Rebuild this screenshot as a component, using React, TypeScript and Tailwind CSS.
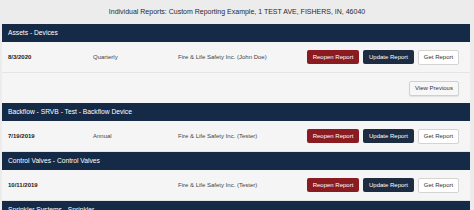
import React from "react";

type Row = { date: string; freq: string; who: string; previous?: boolean };
type Section = { title: string; rows: Row[] };

const sections: Section[] = [
  {
    title: "Assets - Devices",
    rows: [{ date: "8/3/2020", freq: "Quarterly", who: "Fire & Life Safety Inc. (John Doe)", previous: true }],
  },
  {
    title: "Backflow - SRVB - Test - Backflow Device",
    rows: [{ date: "7/19/2019", freq: "Annual", who: "Fire & Life Safety Inc. (Tester)" }],
  },
  {
    title: "Control Valves - Control Valves",
    rows: [{ date: "10/11/2019", freq: "", who: "Fire & Life Safety Inc. (Tester)" }],
  },
  {
    title: "Sprinkler Systems - Sprinkler",
    rows: [],
  },
];

function ReportRow({ row }: { row: Row }) {
  return (
    <>
      <div className="h-[31px] bg-[#f5f5f5] border-b border-[#e4e4e4] flex items-center pl-[6px] pr-[11px]">
        <div className="w-[85px] text-[6px] text-[#222] font-semibold">{row.date}</div>
        <div className="w-[85px] text-[6px] text-[#444]">{row.freq}</div>
        <div className="flex-1 text-[6px] text-[#444]">{row.who}</div>
        <div className="flex items-center gap-[4px]">
          <button className="h-[14px] w-[52px] rounded-[2px] bg-[#8a1c21] text-white text-[6px] flex items-center justify-center">
            Reopen Report
          </button>
          <button className="h-[14px] w-[51px] rounded-[2px] bg-[#1d2c41] text-white text-[6px] flex items-center justify-center">
            Update Report
          </button>
          <button className="h-[15px] w-[41px] rounded-[2px] bg-white border border-[#d4d4d4] text-[#333] text-[6px] flex items-center justify-center">
            Get Report
          </button>
        </div>
      </div>
      {row.previous && (
        <div className="h-[30px] bg-[#f5f5f5] flex items-center justify-end pr-[11px]">
          <button className="h-[15px] w-[50px] rounded-[2px] bg-[#f7f7f7] border border-[#d0d0d0] shadow-[0_1px_1px_rgba(0,0,0,0.08)] text-[#333] text-[6px] flex items-center justify-center">
            View Previous
          </button>
        </div>
      )}
    </>
  );
}

export default function App() {
  return (
    <div className="w-[474px] h-[210px] bg-[#ececec] overflow-hidden font-['Liberation_Sans',Arial,sans-serif]">
      <div className="h-[24px] flex items-center justify-center text-[7px] text-[#2a2a2a]">
        Individual Reports: Custom Reporting Example, 1 TEST AVE, FISHERS, IN, 46040
      </div>
      <div className="ml-[2px] w-[468px]">
        {sections.map((s) => (
          <div key={s.title}>
            <div className="h-[18px] bg-[#142a47] text-white text-[6.7px] flex items-center pl-[6px]">{s.title}</div>
            {s.rows.map((r, i) => (
              <ReportRow key={i} row={r} />
            ))}
          </div>
        ))}
      </div>
    </div>
  );
}
